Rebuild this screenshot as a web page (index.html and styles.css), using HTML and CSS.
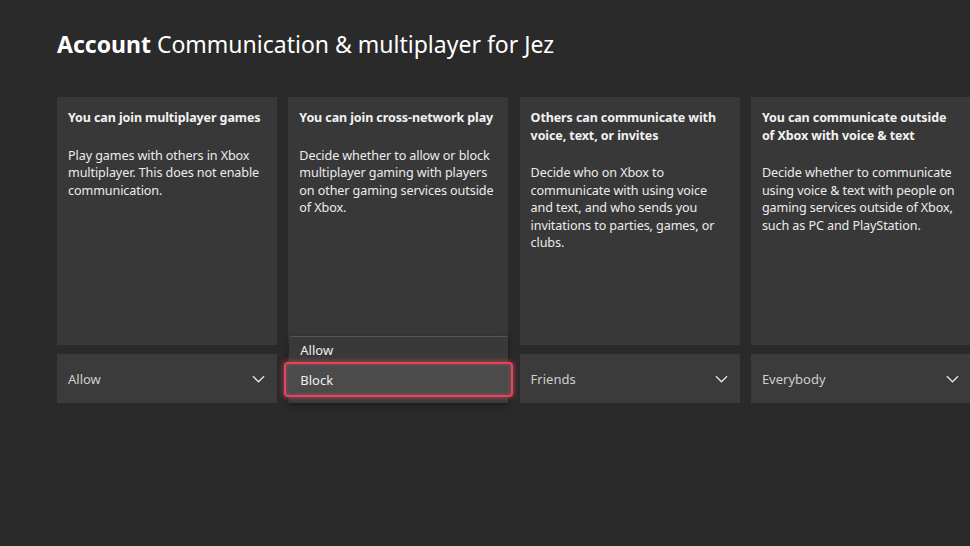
FILE: index.html
```html
<!DOCTYPE html>
<html lang="en">
<head>
  <meta charset="UTF-8">
  <title>Communication &amp; multiplayer</title>
  <link rel="stylesheet" href="styles.css">
</head>
<body>
  <div class="page">
    <h1 class="page-title"><span class="crumb">Account</span> Communication &amp; multiplayer for Jez</h1>

    <div class="settings-row">
      <div class="setting">
        <div class="card">
          <h3>You can join multiplayer games</h3>
          <p>Play games with others in Xbox multiplayer. This does not enable communication.</p>
        </div>
        <div class="dropdown">
          <span>Allow</span>
          <svg class="chevron" viewBox="0 0 14 8"><path d="M1 1 L7 7 L13 1" /></svg>
        </div>
      </div>

      <div class="setting">
        <div class="card">
          <h3>You can join cross-network play</h3>
          <p>Decide whether to allow or block multiplayer gaming with players on other gaming services outside of Xbox.</p>
        </div>
        <!-- dropdown is open: the menu covers it -->
        <div class="dropdown"></div>
        <div class="menu">
          <div class="menu-item">Allow</div>
          <div class="menu-item selected">Block</div>
        </div>
      </div>

      <div class="setting">
        <div class="card">
          <h3>Others can communicate with voice, text, or invites</h3>
          <p>Decide who on Xbox to communicate with using voice and text, and who sends you invitations to parties, games, or clubs.</p>
        </div>
        <div class="dropdown">
          <span>Friends</span>
          <svg class="chevron" viewBox="0 0 14 8"><path d="M1 1 L7 7 L13 1" /></svg>
        </div>
      </div>

      <div class="setting">
        <div class="card">
          <h3>You can communicate outside of Xbox with voice &amp; text</h3>
          <p>Decide whether to communicate using voice &amp; text with people on gaming services outside of Xbox, such as PC and PlayStation.</p>
        </div>
        <div class="dropdown">
          <span>Everybody</span>
          <svg class="chevron" viewBox="0 0 14 8"><path d="M1 1 L7 7 L13 1" /></svg>
        </div>
      </div>
    </div>
  </div>
</body>
</html>
```

FILE: styles.css
```css
:root {
  --bg-color: #2a2a2a;
  --card-color: #383838;
  --dropdown-color: #3b3b3b;
  --text-color: #f2f2f2;
  --muted-text: #cfcfcf;
  --focus-color: #e0475f;
}

html, body {
  margin: 0;
  height: 100%;
  background-color: var(--bg-color);
  overflow: hidden;
}
body {
  font-family: 'Noto Sans', 'Open Sans', sans-serif;
  color: var(--text-color);
}
.page {
  padding: 29px 0 0 57px;
}
.page-title {
  font-size: 23px;
  font-weight: 400;
  margin: 0 0 38px 0;
  line-height: 30px;
  color: #ffffff;
}
.crumb {
  font-weight: 700;
}
.settings-row {
  display: flex;
  gap: 11.3px;
  width: 1200px;
}
.setting {
  width: 220px;
  flex: none;
  display: flex;
  flex-direction: column;
  gap: 9px;
  position: relative;
}
.card {
  background-color: var(--card-color);
  height: 248px;
  padding: 12px 10px 12px 11px;
  box-sizing: border-box;
}
.card h3 {
  font-size: 12.5px;
  font-weight: 700;
  letter-spacing: -0.1px;
  line-height: 17.5px;
  margin: 0 0 20px 0;
}
.card p {
  font-size: 12.6px;
  letter-spacing: -0.1px;
  line-height: 17.5px;
  margin: 0;
  color: #ececec;
}
.dropdown {
  background-color: var(--dropdown-color);
  height: 49px;
  padding: 0 12px 0 11px;
  display: flex;
  align-items: center;
  justify-content: space-between;
  box-sizing: border-box;
  font-size: 13px;
  color: var(--muted-text);
}
.chevron {
  width: 13px;
  height: 8px;
  fill: none;
  stroke: #e6e6e6;
  stroke-width: 1.4;
}
/* Open menu over the cross-network dropdown */
.menu {
  position: absolute;
  left: 1px;
  right: 0;
  top: 239px;
  bottom: 0;
  background-color: #393939;
  border-top: 1px solid #555555;
  border-radius: 2px 2px 0 0;
  box-shadow: 0 2px 6px rgba(0, 0, 0, 0.4);
}
.menu-item {
  height: 25px;
  padding-left: 11px;
  display: flex;
  align-items: center;
  font-size: 13px;
  color: #f0f0f0;
}
.menu-item.selected {
  margin: 0 -5px 0 -5px;
  padding-left: 14px;
  height: 31px;
  background-color: #4b4b4b;
  border: 2px solid var(--focus-color);
  border-radius: 4px;
  box-shadow: 0 0 5px 1px rgba(224, 71, 95, 0.6), inset 0 0 4px rgba(224, 71, 95, 0.5);
}
```
